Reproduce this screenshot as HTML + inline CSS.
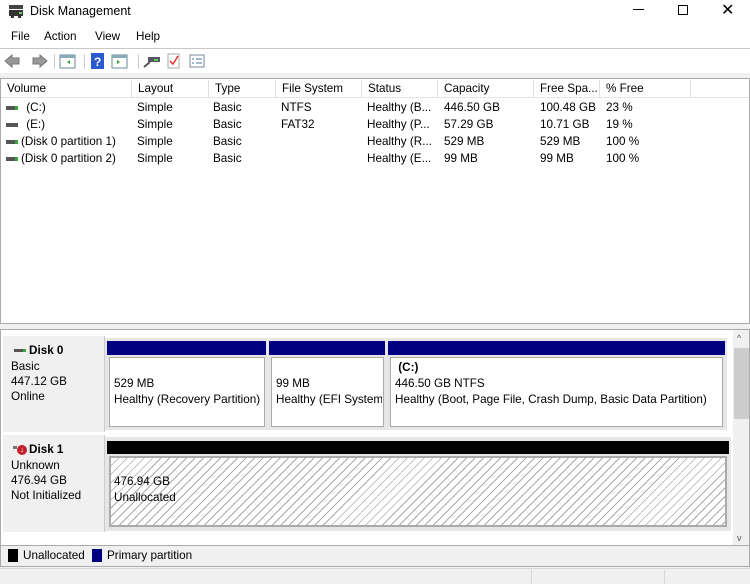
<!DOCTYPE html>
<html><head><style>
*{margin:0;padding:0;box-sizing:border-box}
body{width:750px;height:584px;overflow:hidden;background:#f0f0f0;font-family:"Liberation Sans",sans-serif;font-size:11.7px;color:#000;position:relative}
.a{position:absolute;white-space:nowrap}
.hdr div{position:absolute;top:0;height:18px;line-height:18px;padding-left:6px;border-right:1px solid #e0e0e0}
.row div{position:absolute;line-height:17px}
.ic{display:inline-block;width:12px;height:4px;background:#555;border-right:3px solid #3a3;vertical-align:middle;margin-right:5px}
.hatch{background:repeating-linear-gradient(135deg,#fff 0,#fff 5px,#aaa 5px,#aaa 6px)}
</style></head><body>
<div class="a" style="left:0;top:0;width:750px;height:48px;background:#fff"></div>
<svg class="a" style="left:8px;top:4px" width="16" height="14"><rect x="1" y="1" width="14" height="4" fill="#444"/><rect x="1" y="6" width="14" height="6" fill="#333"/><rect x="3" y="12" width="3" height="2" fill="#333"/><rect x="10" y="12" width="3" height="2" fill="#333"/><rect x="11" y="8" width="3" height="2" fill="#6c6"/></svg>
<div class="a" style="left:30px;top:4px;font-size:12.5px">Disk Management</div>
<div class="a" style="left:633px;top:9px;width:11px;height:1px;background:#000"></div>
<div class="a" style="left:678px;top:5px;width:10px;height:10px;border:1px solid #000"></div>
<div class="a" style="left:721px;top:0px;font-size:16px">✕</div>
<div class="a" style="left:11px;top:30px">File</div>
<div class="a" style="left:44px;top:30px">Action</div>
<div class="a" style="left:95px;top:30px">View</div>
<div class="a" style="left:136px;top:30px">Help</div>
<div class="a" style="left:0;top:48px;width:750px;height:1px;background:#c8c8c8"></div>
<div class="a" style="left:0;top:49px;width:750px;height:24px;background:#fff"></div>
<svg class="a" style="left:4px;top:52px" width="210" height="18">
<path d="M1 9 L8 3 L8 6 L15 6 L15 12 L8 12 L8 15 Z" fill="#999" stroke="#777"/>
<path d="M43 9 L36 3 L36 6 L29 6 L29 12 L36 12 L36 15 Z" fill="#999" stroke="#777"/>
<rect x="50" y="2" width="1" height="15" fill="#ccc"/>
<rect x="56" y="3" width="15" height="13" fill="#fff" stroke="#6a8a9a"/><rect x="56" y="3" width="15" height="3" fill="#8ab"/><path d="M66 8 L63 10 L66 12Z" fill="#3a3"/>
<rect x="80" y="2" width="1" height="15" fill="#ccc"/>
<rect x="87" y="1" width="13" height="16" fill="#2a5ad0"/><text x="90" y="14" fill="#fff" font-size="12" font-weight="bold">?</text>
<rect x="108" y="3" width="15" height="13" fill="#fff" stroke="#6a8a9a"/><rect x="108" y="3" width="15" height="3" fill="#8ab"/><path d="M113 8 L116 10 L113 12Z" fill="#3a3"/>
<rect x="134" y="2" width="1" height="15" fill="#ccc"/>
<rect x="144" y="5" width="12" height="5" fill="#556"/><rect x="150" y="7" width="4" height="2" fill="#5c5"/><path d="M140 15 L146 10" stroke="#555" stroke-width="2"/>
<rect x="164" y="2" width="11" height="14" fill="#fff" stroke="#aaa"/><path d="M166 9 L169 12 L174 4" stroke="#e33" stroke-width="1.5" fill="none"/>
<rect x="186" y="3" width="14" height="12" fill="#fff" stroke="#789"/><path d="M188 7h2M192 7h6M188 11h2M192 11h6" stroke="#47a"/>
</svg>
<div class="a" style="left:0;top:78px;width:750px;height:246px;background:#fff;border:1px solid #aaa"></div>
<div class="a hdr" style="left:1px;top:80px;width:748px;height:18px;border-bottom:1px solid #e5e5e5">
<div style="left:0;width:131px">Volume</div><div style="left:131px;width:77px">Layout</div><div style="left:208px;width:67px">Type</div><div style="left:275px;width:86px">File System</div><div style="left:361px;width:76px">Status</div><div style="left:437px;width:96px">Capacity</div><div style="left:533px;width:66px">Free Spa...</div><div style="left:599px;width:91px">% Free</div>
</div>
<div class="a row" style="left:0;top:99px;width:750px">
<div style="left:6px;top:0"><span class="ic"></span>&nbsp;(C:)</div><div style="left:6px;top:17px"><span class="ic" style="border-right-color:#555"></span>&nbsp;(E:)</div><div style="left:6px;top:34px"><span class="ic" style="margin-right:3px"></span>(Disk 0 partition 1)</div><div style="left:6px;top:51px"><span class="ic" style="margin-right:3px"></span>(Disk 0 partition 2)</div>
<div style="left:137px;top:0">Simple</div><div style="left:137px;top:17px">Simple</div><div style="left:137px;top:34px">Simple</div><div style="left:137px;top:51px">Simple</div>
<div style="left:213px;top:0">Basic</div><div style="left:213px;top:17px">Basic</div><div style="left:213px;top:34px">Basic</div><div style="left:213px;top:51px">Basic</div>
<div style="left:281px;top:0">NTFS</div><div style="left:281px;top:17px">FAT32</div>
<div style="left:367px;top:0">Healthy (B...</div><div style="left:367px;top:17px">Healthy (P...</div><div style="left:367px;top:34px">Healthy (R...</div><div style="left:367px;top:51px">Healthy (E...</div>
<div style="left:444px;top:0">446.50 GB</div><div style="left:444px;top:17px">57.29 GB</div><div style="left:444px;top:34px">529 MB</div><div style="left:444px;top:51px">99 MB</div>
<div style="left:540px;top:0">100.48 GB</div><div style="left:540px;top:17px">10.71 GB</div><div style="left:540px;top:34px">529 MB</div><div style="left:540px;top:51px">99 MB</div>
<div style="left:606px;top:0">23 %</div><div style="left:606px;top:17px">19 %</div><div style="left:606px;top:34px">100 %</div><div style="left:606px;top:51px">100 %</div>
</div>
<div class="a" style="left:0;top:329px;width:750px;height:238px;background:#fff;border:1px solid #aaa"></div>
<div class="a" style="left:733px;top:330px;width:16px;height:216px;background:#f0f0f0"></div>
<div class="a" style="left:734px;top:348px;width:15px;height:71px;background:#cdcdcd"></div>
<div class="a" style="left:737px;top:333px;font-size:9px;color:#555">^</div>
<div class="a" style="left:737px;top:533px;font-size:9px;color:#555">v</div>
<div class="a" style="left:3px;top:336px;width:102px;height:96px;background:#f0f0f0;border-right:1px solid #ccc"></div>
<div class="a" style="left:14px;top:349px;width:12px;height:3px;background:#555;border-right:3px solid #3a3"></div>
<div class="a" style="left:29px;top:344px;font-weight:bold">Disk 0</div>
<div class="a" style="left:11px;top:359px;line-height:15px">Basic<br>447.12 GB<br>Online</div>
<div class="a" style="left:105px;top:338px;width:622px;height:92px;background:#e6e6e6"></div>
<div class="a" style="left:107px;top:341px;width:159px;height:14px;background:#000080"></div>
<div class="a" style="left:269px;top:341px;width:116px;height:14px;background:#000080"></div>
<div class="a" style="left:388px;top:341px;width:337px;height:14px;background:#000080"></div>
<div class="a" style="left:109px;top:357px;width:156px;height:70px;background:#fff;border:1px solid #aaa"></div>
<div class="a" style="left:271px;top:357px;width:113px;height:70px;background:#fff;border:1px solid #aaa"></div>
<div class="a" style="left:390px;top:357px;width:333px;height:70px;background:#fff;border:1px solid #aaa"></div>
<div class="a" style="left:114px;top:376px;line-height:16px;width:148px;overflow:hidden">529 MB<br>Healthy (Recovery Partition)</div>
<div class="a" style="left:276px;top:376px;line-height:16px;width:106px;overflow:hidden">99 MB<br>Healthy (EFI System</div>
<div class="a" style="left:395px;top:360px;line-height:16px"><b>&nbsp;(C:)</b><br>446.50 GB NTFS<br>Healthy (Boot, Page File, Crash Dump, Basic Data Partition)</div>
<div class="a" style="left:3px;top:435px;width:102px;height:97px;background:#f0f0f0;border-right:1px solid #ccc"></div>
<div class="a" style="left:13px;top:446px;width:4px;height:3px;background:#777"></div>
<div class="a" style="left:17px;top:445px;width:10px;height:10px;border-radius:50%;background:#c0202a;color:#fff;font-size:8px;line-height:10px;text-align:center;font-weight:bold">↓</div>
<div class="a" style="left:29px;top:443px;font-weight:bold">Disk 1</div>
<div class="a" style="left:11px;top:458px;line-height:15px">Unknown<br>476.94 GB<br>Not Initialized</div>
<div class="a" style="left:105px;top:437px;width:626px;height:94px;background:#e6e6e6"></div>
<div class="a" style="left:107px;top:441px;width:622px;height:13px;background:#000"></div>
<div class="a hatch" style="left:109px;top:456px;width:618px;height:71px;border:2px solid #aaa"></div>
<div class="a" style="left:114px;top:474px;line-height:16px">476.94 GB<br>Unallocated</div>
<div class="a" style="left:1px;top:545px;width:748px;height:1px;background:#aaa"></div>
<div class="a" style="left:1px;top:546px;width:748px;height:20px;background:#f0f0f0"></div>
<div class="a" style="left:8px;top:549px;width:10px;height:13px;background:#000"></div>
<div class="a" style="left:23px;top:549px">Unallocated</div>
<div class="a" style="left:92px;top:549px;width:10px;height:13px;background:#000080"></div>
<div class="a" style="left:107px;top:549px">Primary partition</div>
<div class="a" style="left:0;top:568px;width:750px;height:1px;background:#d7d7d7"></div>
<div class="a" style="left:531px;top:570px;width:1px;height:14px;background:#d7d7d7"></div>
<div class="a" style="left:664px;top:570px;width:1px;height:14px;background:#d7d7d7"></div>
</body></html>
